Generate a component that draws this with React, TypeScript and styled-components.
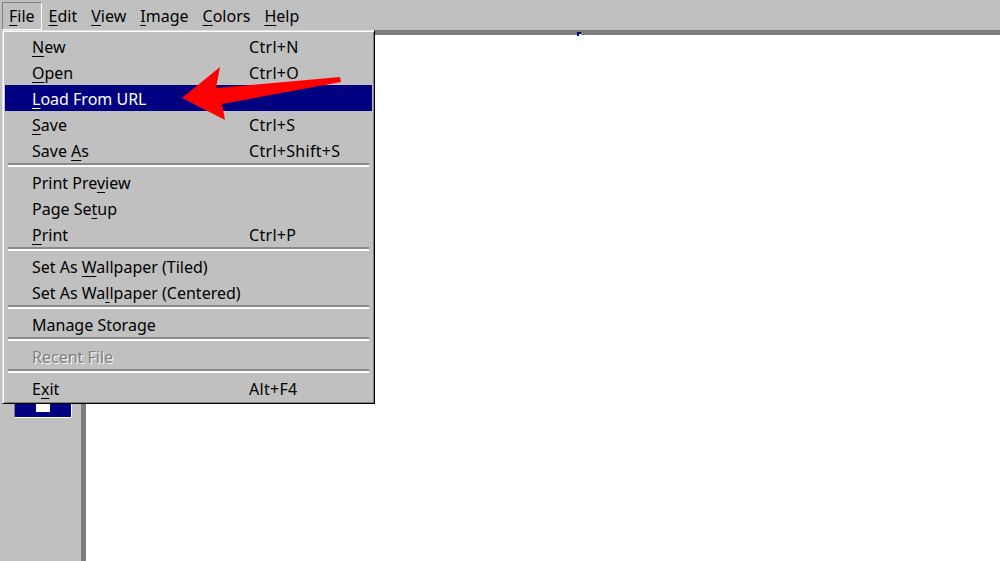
import React from 'react';
import styled, { createGlobalStyle } from 'styled-components';

const Global = createGlobalStyle`
  html, body { margin: 0; padding: 0; height: 100%; overflow: hidden; background: #c0c0c0; }
  #root { height: 100%; }
  body { font-family: "Noto Sans", "Open Sans", sans-serif; font-size: 16px; color: #000; }
`;

const Page = styled.div`
  position: relative;
  width: 1000px;
  height: 561px;
  display: flex;
  flex-direction: column;
  background: #c0c0c0;
  overflow: hidden;
`;

const MenuBar = styled.div`
  height: 30px;
  box-sizing: border-box;
  padding: 2px 0 0 2px;
  display: flex;
  align-items: flex-start;
`;

const MenuButton = styled.div<{ $open?: boolean }>`
  height: 28px;
  box-sizing: border-box;
  padding: 0 6px;
  display: flex;
  align-items: center;
  border: 1px solid transparent;
  ${(p) => p.$open && `border-color: #808080 #fff #fff #808080;`}
`;

const Key = styled.span`
  text-decoration: underline;
  text-decoration-thickness: 1px;
  text-underline-offset: 3px;
`;

const Body = styled.div`
  flex: 1;
  display: flex;
  min-height: 0;
`;

const Toolbox = styled.div`
  width: 81px;
  flex: none;
  display: flex;
  flex-direction: column;
  align-items: flex-start;
  padding: 4px 0 0 4px;
  box-sizing: border-box;
`;

const ToolGrid = styled.div`
  display: grid;
  grid-template-columns: repeat(2, 25px);
  grid-auto-rows: 25px;
  margin-left: 11px;
`;

const ToolButton = styled.div`
  box-sizing: border-box;
  border: 1px solid;
  border-color: #fff #000 #000 #fff;
  box-shadow: inset -1px -1px #808080;
`;

const OptionsBox = styled.div`
  margin: 118px 0 0 10px;
  width: 58px;
  height: 66px;
  box-sizing: border-box;
  border: 1px solid;
  border-color: #808080 #fff #fff #808080;
  display: flex;
  flex-direction: column;
`;

const OptionRow = styled.div<{ $selected?: boolean }>`
  flex: 1;
  display: flex;
  align-items: center;
  justify-content: center;
  background: ${(p) => (p.$selected ? '#000080' : 'transparent')};
`;

const OptionSwatch = styled.div`
  width: 14px;
  height: 9px;
  background: #fff;
  margin-top: 2px;
`;

const CanvasArea = styled.div`
  position: relative;
  flex: 1;
  background: #fff;
  border-top: 5px solid #7d7d7d;
  border-left: 5px solid #7d7d7d;
`;

const Handle = styled.div`
  position: absolute;
  left: 491px;
  top: -3px;
  width: 2px;
  height: 2px;
  background: #fff;
  border-left: 2px solid #000080;
  border-top: 2px solid #000080;
`;

const Dropdown = styled.div`
  position: absolute;
  left: 2px;
  top: 30px;
  width: 373px;
  box-sizing: border-box;
  border: 1px solid;
  border-color: #dfdfdf #000 #000 #dfdfdf;
  box-shadow: inset 1px 1px #fff, inset -1px -1px #808080;
  padding: 2px;
  background: #c0c0c0;
  z-index: 5;
`;

const Item = styled.div<{ $active?: boolean; $disabled?: boolean }>`
  height: 26px;
  display: grid;
  grid-template-columns: 217px 1fr;
  align-items: center;
  padding: 2px 0 0 27px;
  box-sizing: border-box;
  white-space: nowrap;
  background: ${(p) => (p.$active ? '#000080' : 'transparent')};
  color: ${(p) => (p.$active ? '#fff' : p.$disabled ? '#808080' : '#000')};
  ${(p) => p.$disabled && `text-shadow: 1px 1px 0 #fff;`}
`;

const Shortcut = styled.span`
  letter-spacing: 0.3px;
`;

const Separator = styled.div`
  height: 6px;
  box-sizing: border-box;
  padding: 0 3px;
  &::after {
    content: '';
    display: block;
    border-top: 2px solid #8a8a8a;
    border-bottom: 2px solid #fff;
  }
`;

const Arrow = styled.svg`
  position: absolute;
  left: 0;
  top: 0;
  z-index: 10;
  pointer-events: none;
`;

type Entry =
  | { sep: true }
  | { label: React.ReactNode; shortcut?: string; active?: boolean; disabled?: boolean };

const entries: Entry[] = [
  { label: <><Key>N</Key>ew</>, shortcut: 'Ctrl+N' },
  { label: <><Key>O</Key>pen</>, shortcut: 'Ctrl+O' },
  { label: <><Key>L</Key>oad From URL</>, active: true },
  { label: <><Key>S</Key>ave</>, shortcut: 'Ctrl+S' },
  { label: <>Save <Key>A</Key>s</>, shortcut: 'Ctrl+Shift+S' },
  { sep: true },
  { label: <>Print Pre<Key>v</Key>iew</> },
  { label: <>Page Se<Key>t</Key>up</> },
  { label: <><Key>P</Key>rint</>, shortcut: 'Ctrl+P' },
  { sep: true },
  { label: <>Set As <Key>W</Key>allpaper (Tiled)</> },
  { label: <>Set As Wa<Key>l</Key>lpaper (Centered)</> },
  { sep: true },
  { label: <>Manage Storage</> },
  { sep: true },
  { label: <>Recent File</>, disabled: true },
  { sep: true },
  { label: <>E<Key>x</Key>it</>, shortcut: 'Alt+F4' },
];

export default function App() {
  return (
    <Page>
      <Global />
      <MenuBar>
        <MenuButton $open><span><Key>F</Key>ile</span></MenuButton>
        <MenuButton><span><Key>E</Key>dit</span></MenuButton>
        <MenuButton><span><Key>V</Key>iew</span></MenuButton>
        <MenuButton><span><Key>I</Key>mage</span></MenuButton>
        <MenuButton><span><Key>C</Key>olors</span></MenuButton>
        <MenuButton><span><Key>H</Key>elp</span></MenuButton>
      </MenuBar>
      <Body>
        <Toolbox>
          <ToolGrid>
            {Array.from({ length: 16 }).map((_, i) => (
              <ToolButton key={i} />
            ))}
          </ToolGrid>
          <OptionsBox>
            <OptionRow />
            <OptionRow />
            <OptionRow $selected>
              <OptionSwatch />
            </OptionRow>
          </OptionsBox>
        </Toolbox>
        <CanvasArea>
          <Handle />
        </CanvasArea>
      </Body>
      <Dropdown>
        {entries.map((e, i) =>
          'sep' in e ? (
            <Separator key={i} />
          ) : (
            <Item key={i} $active={e.active} $disabled={e.disabled}>
              <span>{e.label}</span>
              <Shortcut>{e.shortcut}</Shortcut>
            </Item>
          )
        )}
      </Dropdown>
      <Arrow width="1000" height="561" viewBox="0 0 1000 561">
        <polygon
          points="182,98 220,67 216,88 340,77 341,82 222,104 225,120"
          fill="#ff0000"
        />
      </Arrow>
    </Page>
  );
}
